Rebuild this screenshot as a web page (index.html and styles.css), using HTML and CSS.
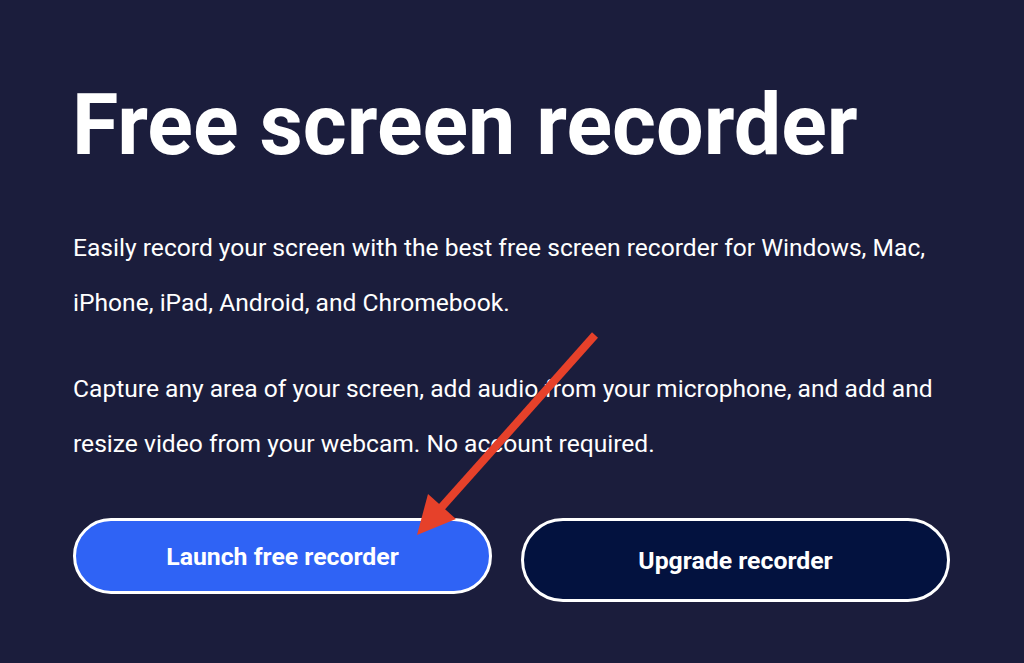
FILE: index.html
```html
<!DOCTYPE html>
<html lang="en">
<head>
<meta charset="utf-8">
<title>Free screen recorder</title>
<link rel="stylesheet" href="styles.css">
</head>
<body>
<main class="hero">
  <h1 class="title">Free screen recorder</h1>
  <p class="lead">Easily record your screen with the best free screen recorder for Windows, Mac, iPhone, iPad, Android, and Chromebook.</p>
  <p class="lead lead-second">Capture any area of your screen, add audio from your microphone, and add and resize video from your webcam. No account required.</p>
  <div class="actions">
    <a class="btn btn-primary" href="#">Launch free recorder</a>
    <a class="btn btn-secondary" href="#">Upgrade recorder</a>
  </div>
</main>
<svg class="arrow" width="1024" height="663" viewBox="0 0 1024 663" aria-hidden="true">
  <line x1="595" y1="335" x2="440" y2="509" stroke="#e6412a" stroke-width="8"/>
  <polygon points="417,535 428,494 456,519" fill="#e6412a"/>
</svg>
</body>
</html>
```

FILE: styles.css
```css
html, body {
  margin: 0;
  padding: 0;
}
body {
  background: #1b1d3c;
  width: 1024px;
  height: 663px;
  overflow: hidden;
  position: relative;
  font-family: Roboto, "Liberation Sans", sans-serif;
  color: #ffffff;
}
.hero {
  padding: 78px 0 0 73px;
}
.title {
  margin: 0 0 0 -1px;
  font-size: 84.4px;
  line-height: 96px;
  font-weight: 700;
}
.lead {
  margin: 46px 0 0 0;
  width: 900px;
  font-size: 24.6px;
  line-height: 55px;
  font-weight: 400;
}
.lead-second {
  margin-top: 31px;
}
.actions {
  display: flex;
  align-items: flex-start;
  gap: 29px;
  margin-top: 47px;
}
.btn {
  box-sizing: border-box;
  display: flex;
  align-items: center;
  justify-content: center;
  border: 3px solid #ffffff;
  border-radius: 999px;
  color: #ffffff;
  text-decoration: none;
  font-weight: 700;
  font-size: 24.8px;
}
.btn-primary {
  width: 419px;
  height: 76px;
  background: #2f63f5;
}
.btn-secondary {
  width: 429px;
  height: 84px;
  background: #03123f;
}
.arrow {
  position: absolute;
  left: 0;
  top: 0;
  pointer-events: none;
}
```
